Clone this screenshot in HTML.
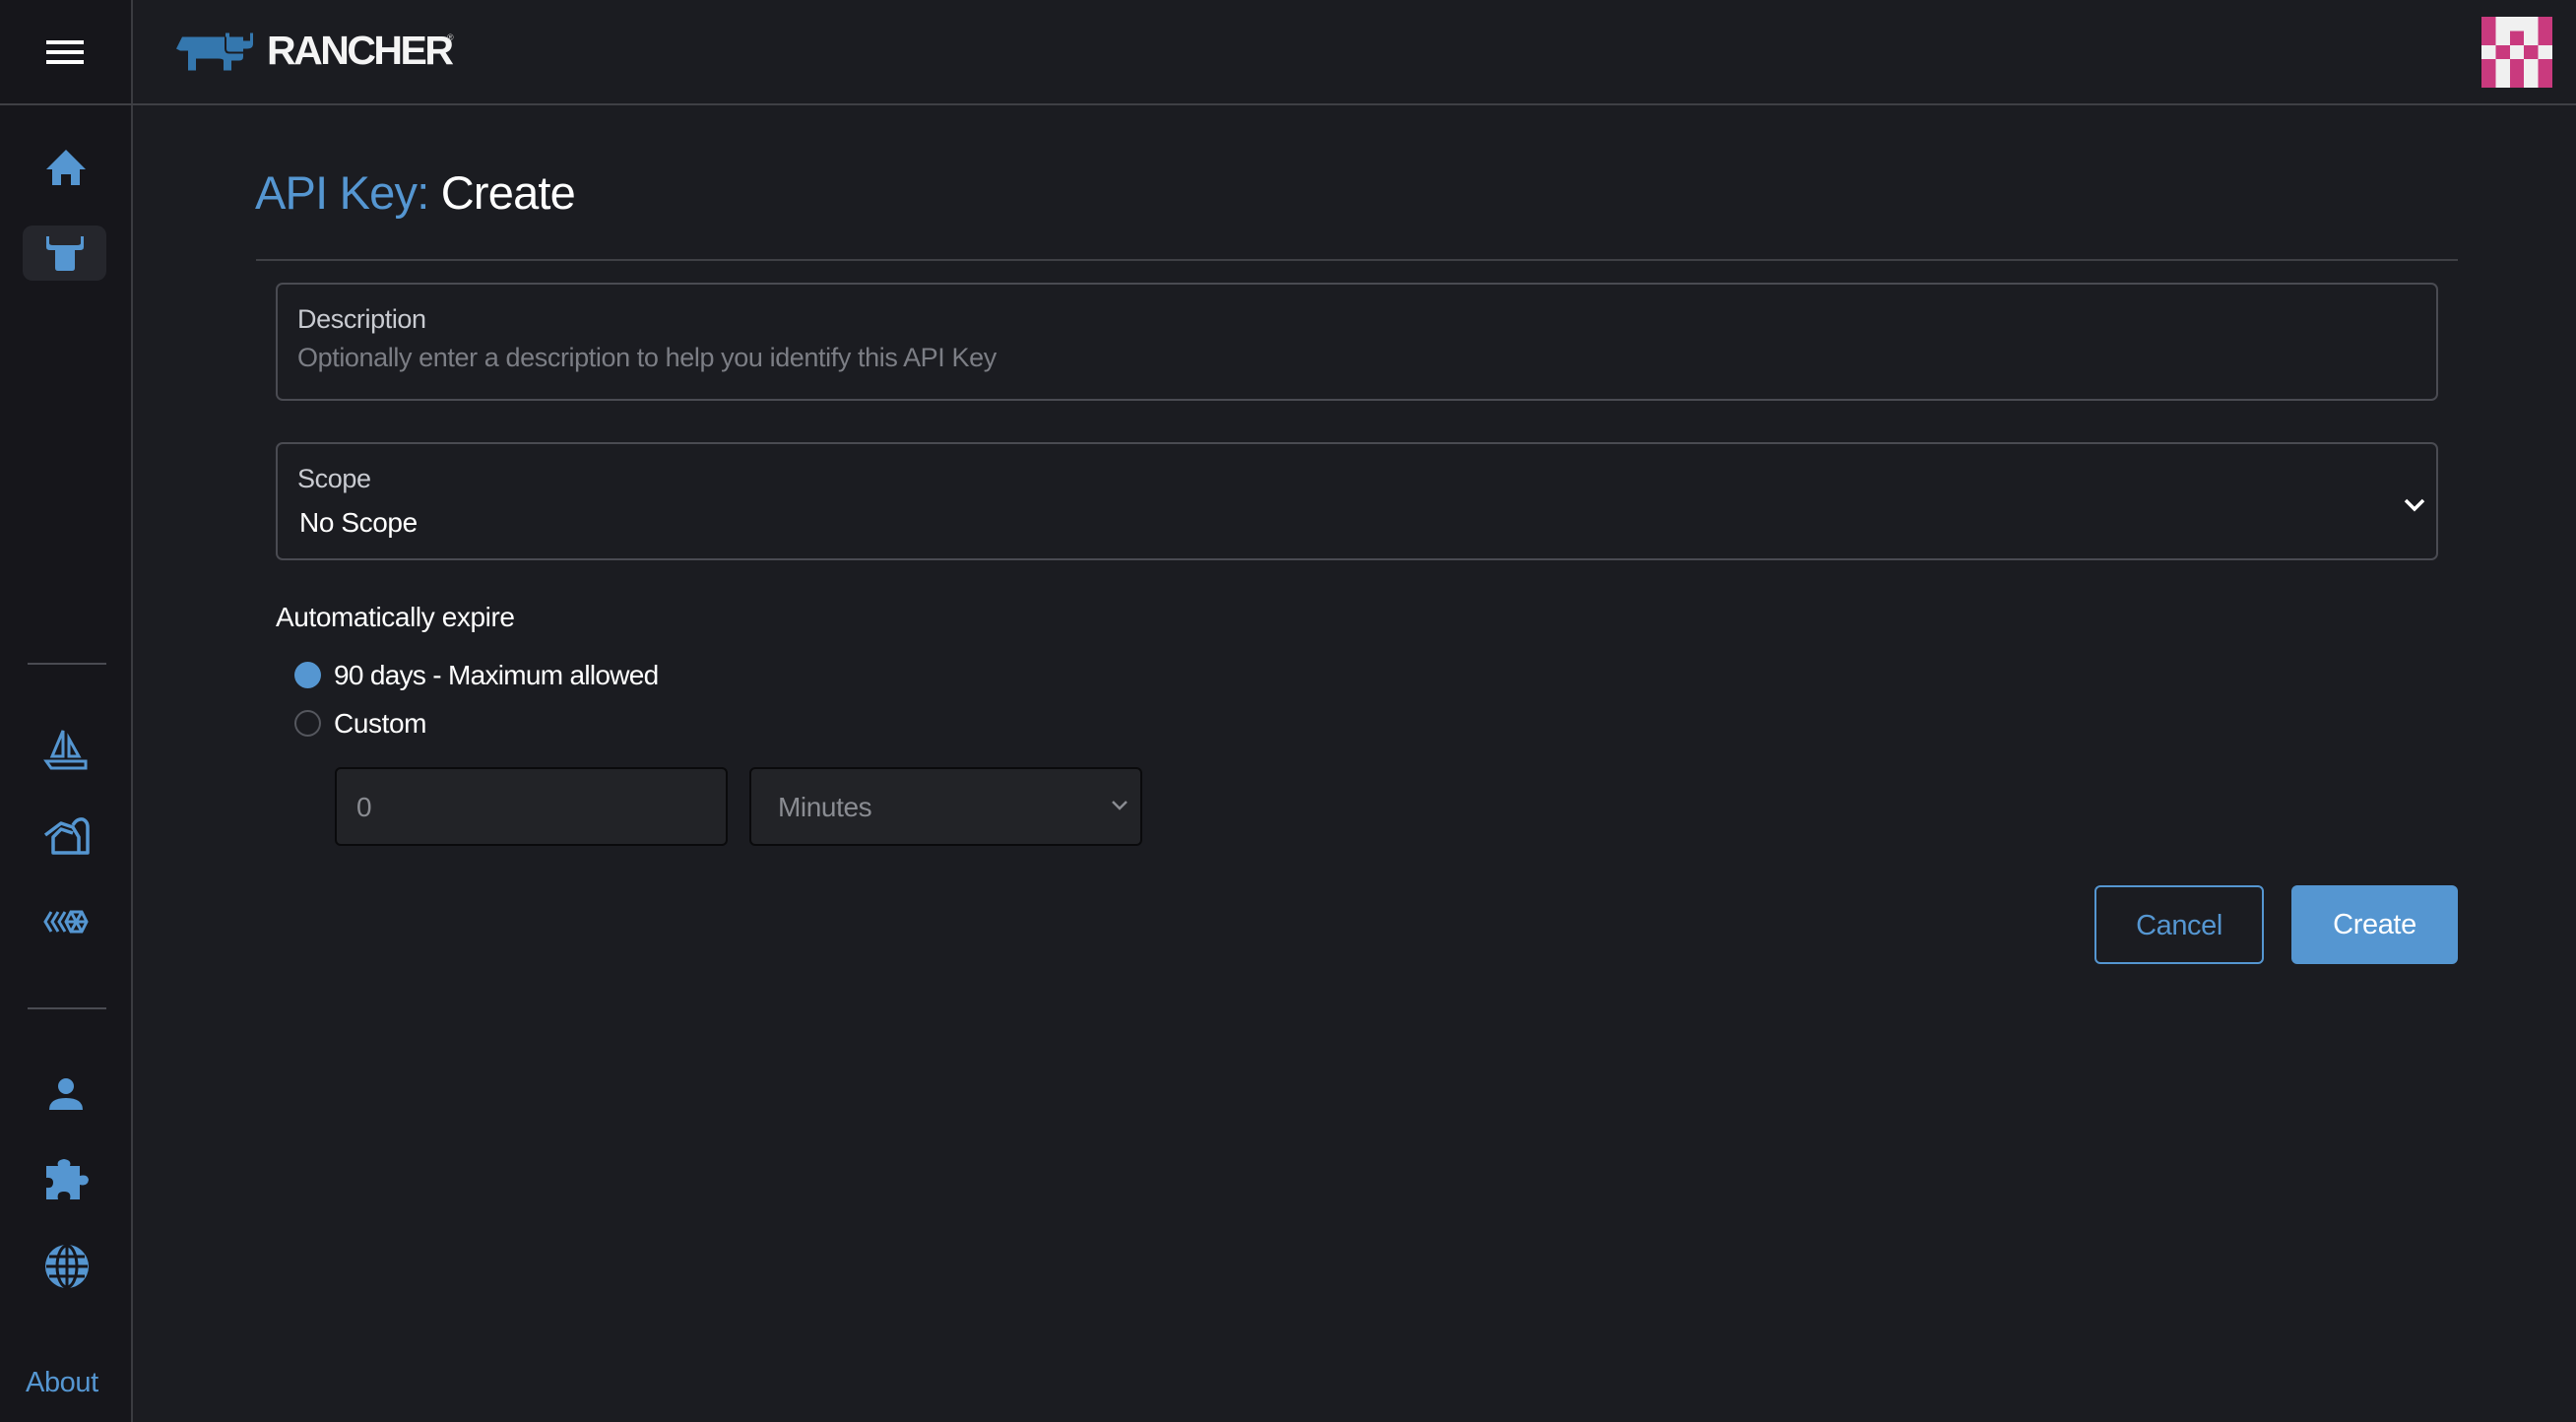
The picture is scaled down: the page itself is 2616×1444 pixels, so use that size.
<!DOCTYPE html>
<html><head><meta charset="utf-8"><style>
*{box-sizing:border-box;margin:0;padding:0}
body{width:2616px;height:1444px;background:#1b1c21;font-family:"Liberation Sans",sans-serif;position:relative;overflow:hidden;color:#fff;letter-spacing:-0.4px}
.side{position:absolute;left:0;top:0;width:135px;height:1444px;background:#16161b;border-right:2px solid #3a3b40}
.hdr{position:absolute;left:0;top:0;width:2616px;height:107px;border-bottom:2px solid #3f4045}
.abs{position:absolute}
.box{position:absolute;border:2px solid #4a4b52;border-radius:7px;background:#1b1c21}
.lbl{position:absolute;font-size:27px;color:#c9cbd1}
</style></head><body>
<div class="side"></div>
<div class="hdr"></div>
<div class="abs" style="left:47px;top:41px;width:38px;height:4px;background:#fff"></div>
<div class="abs" style="left:47px;top:51px;width:38px;height:4px;background:#fff"></div>
<div class="abs" style="left:47px;top:61px;width:38px;height:4px;background:#fff"></div>
<svg class="abs" style="left:177px;top:30px" width="86" height="45" viewBox="0 0 86 42"><path fill="#3477ae" d="M2 18 L8 6 H52 V2 H56 V6 H70 V10 H77 V2 H80 V13 Q80 18 74 18 H70 V26 Q70 30 66 30 H58 V40 H50 V30 Q50 28 44 28 H22 V40 H14 V20 H6 Z"/><path fill="none" d="M52 6 V18 Q52 22 56 22 H70" stroke="#1b1c21" stroke-width="2"/></svg>
<div class="abs" style="left:271px;top:28px;font-size:41px;font-weight:bold;letter-spacing:-2.5px;color:#f4f4f4">RANCHER</div>
<div class="abs" style="left:454px;top:33px;font-size:9px;color:#ccc">®</div>
<svg class="abs" style="left:2520px;top:17px" width="72" height="72" viewBox="0 0 5 5" shape-rendering="crispEdges">
<rect width="5" height="5" fill="#f0f0f0"/>
<g fill="#c93a7e"><rect x="0" y="0" width="1" height="2"/><rect x="4" y="0" width="1" height="2"/><rect x="2" y="1" width="1" height="1"/><rect x="1" y="2" width="1" height="1"/><rect x="3" y="2" width="1" height="1"/><rect x="0" y="3" width="1" height="2"/><rect x="2" y="3" width="1" height="2"/><rect x="4" y="3" width="1" height="2"/></g></svg>
<svg class="abs" style="left:46px;top:150px" width="42" height="40" viewBox="0 0 42 40"><path fill="#5596d1" d="M21 2 L41 22 H35 V38 H26 V27 H16 V38 H7 V22 H1 Z"/></svg>
<div class="abs" style="left:23px;top:229px;width:85px;height:56px;background:#25262c;border-radius:10px"></div>
<svg class="abs" style="left:46px;top:239px" width="40" height="38" viewBox="0 0 40 38"><path fill="#5596d1" d="M1 1 H4 V8 Q4 10 8 10 H32 Q36 10 36 8 V1 H39 V12 Q39 15 35 15 H30 V33 Q30 36 27 36 H13 Q10 36 10 33 V15 H5 Q1 15 1 12 Z"/></svg>
<div class="abs" style="left:28px;top:673px;width:80px;height:2px;background:#4a4b52"></div>
<div class="abs" style="left:28px;top:1023px;width:80px;height:2px;background:#4a4b52"></div>
<svg class="abs" style="left:44px;top:738px" width="46" height="46" viewBox="0 0 46 46" fill="none" stroke="#5596d1" stroke-width="3"><path d="M20 4 L9 30 H20 Z"/><path d="M26 12 L36 30 H26 Z"/><path d="M3 35 H43 V42 H8 Z"/></svg>
<svg class="abs" style="left:44px;top:828px" width="48" height="42" viewBox="0 0 48 42" fill="none" stroke="#5596d1" stroke-width="3.5" stroke-linejoin="round"><path d="M2 20 L18 8 L30 12 L36 22 V38 H10 V22 L18 14 L30 18"/><path d="M30 10 Q34 3 40 4 Q45 6 45 12 V38 H36"/></svg>
<svg class="abs" style="left:43px;top:922px" width="48" height="28" viewBox="0 0 48 28" fill="none" stroke="#5596d1" stroke-width="3"><path d="M9 4 L3 14 L9 24 M16 4 L10 14 L16 24 M23 4 L17 14 L23 24"/><path d="M29 4 H40 L45 14 L40 24 H29 L24 14 Z M29 4 L40 24 M40 4 L29 24 M24 14 H45"/></svg>
<svg class="abs" style="left:48px;top:1093px" width="38" height="36" viewBox="0 0 38 36"><circle cx="19" cy="10" r="8" fill="#5596d1"/><path fill="#5596d1" d="M2 34 Q2 22 19 22 Q36 22 36 34 Z"/></svg>
<svg class="abs" style="left:45px;top:1176px" width="46" height="46" viewBox="0 0 46 46"><path fill="#5596d1" d="M2 8 H14 Q12 2 20 1 Q28 2 26 8 H36 V18 Q44 16 45 22 Q44 29 36 27 V42 H26 Q28 34 20 34 Q12 34 14 42 H2 V30 Q9 31 9 25 Q9 19 2 20 Z"/></svg>
<svg class="abs" style="left:44px;top:1262px" width="48" height="48" viewBox="0 0 48 48"><circle cx="24" cy="24" r="22" fill="#5596d1"/><g stroke="#16161b" stroke-width="3" fill="none"><ellipse cx="24" cy="24" rx="10" ry="21"/><path d="M24 3 V45 M3 24 H45 M6 14 H42 M6 34 H42"/></g></svg>
<div class="abs" style="left:26px;top:1388px;font-size:29px;color:#5596d1">About</div>
<div class="abs" style="left:259px;top:168px;font-size:47px;letter-spacing:-0.8px"><span style="color:#5596d1">API Key:</span> <span style="color:#fff">Create</span></div>
<div class="abs" style="left:260px;top:263px;width:2236px;height:2px;background:#3f4045"></div>
<div class="box" style="left:280px;top:287px;width:2196px;height:120px"></div>
<div class="lbl" style="left:302px;top:309px">Description</div>
<div class="abs" style="left:302px;top:348px;font-size:27px;color:#7c7e85">Optionally enter a description to help you identify this API Key</div>
<div class="box" style="left:280px;top:449px;width:2196px;height:120px"></div>
<div class="lbl" style="left:302px;top:471px">Scope</div>
<div class="abs" style="left:304px;top:515px;font-size:28px;color:#fff">No Scope</div>
<svg class="abs" style="left:2440px;top:505px" width="24" height="16" viewBox="0 0 24 16"><path d="M3 3 L12 12 L21 3" stroke="#fff" stroke-width="3.5" fill="none"/></svg>
<div class="abs" style="left:280px;top:611px;font-size:28px;color:#fff">Automatically expire</div>
<div class="abs" style="left:299px;top:672px;width:27px;height:27px;border-radius:50%;background:#5596d1"></div>
<div class="abs" style="left:339px;top:670px;font-size:28px;color:#fff;letter-spacing:-0.7px">90 days - Maximum allowed</div>
<div class="abs" style="left:299px;top:721px;width:27px;height:27px;border-radius:50%;border:2px solid #55575e"></div>
<div class="abs" style="left:339px;top:719px;font-size:28px;color:#fff">Custom</div>
<div class="abs" style="left:340px;top:779px;width:399px;height:80px;background:#222327;border:2px solid #0a0a0c;border-radius:6px"></div>
<div class="abs" style="left:362px;top:804px;font-size:28px;color:#8a8c92">0</div>
<div class="abs" style="left:761px;top:779px;width:399px;height:80px;background:#222327;border:2px solid #0a0a0c;border-radius:6px"></div>
<div class="abs" style="left:790px;top:804px;font-size:28px;color:#8a8c92">Minutes</div>
<svg class="abs" style="left:1127px;top:811px" width="20" height="14" viewBox="0 0 20 14"><path d="M3 3 L10 10 L17 3" stroke="#8a8c92" stroke-width="2.5" fill="none"/></svg>
<div class="abs" style="left:2127px;top:899px;width:172px;height:80px;border:2px solid #5596d1;border-radius:6px;color:#5596d1;font-size:29px;text-align:center;line-height:78px">Cancel</div>
<div class="abs" style="left:2327px;top:899px;width:169px;height:80px;background:#5596d1;border-radius:6px;color:#fff;font-size:29px;text-align:center;line-height:81px">Create</div>
</body></html>
